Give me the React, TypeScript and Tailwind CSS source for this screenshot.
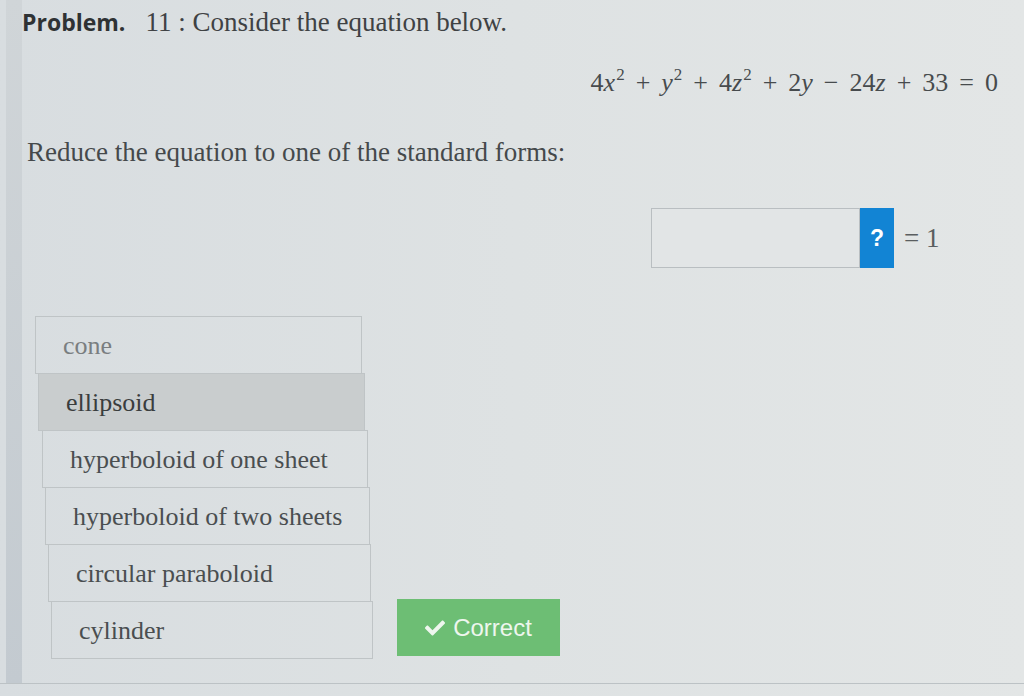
import { FaCheck } from "react-icons/fa";

const SERIF = "font-['Liberation_Serif','DejaVu_Serif',serif]";

const OPTIONS = [
  { label: "cone", indent: "ml-[13px]", width: "w-[327px]", muted: true },
  { label: "ellipsoid", indent: "ml-[16px]", width: "w-[327px]", selected: true },
  { label: "hyperboloid of one sheet", indent: "ml-[20px]", width: "w-[326px]" },
  { label: "hyperboloid of two sheets", indent: "ml-[23px]", width: "w-[325px]" },
  { label: "circular paraboloid", indent: "ml-[26px]", width: "w-[323px]" },
];

function Var({ children }: { children: React.ReactNode }) {
  return <span className="italic">{children}</span>;
}

function Sq() {
  return <sup className="-top-[11px] ml-[1px] text-[17px]">2</sup>;
}

function Op({ children }: { children: React.ReactNode }) {
  return <span className="mx-[11px]">{children}</span>;
}

function OptionRow({
  label,
  width,
  selected,
  muted,
}: {
  label: string;
  width: string;
  selected?: boolean;
  muted?: boolean;
}) {
  return (
    <div
      className={
        "-mt-px flex h-[58px] items-center border border-[#bfc4c6] pl-[27px] text-[26px] " +
        width +
        " " +
        (selected ? "bg-[#c9cdce] text-[#3a3d3e]" : muted ? "text-[#7a7e80]" : "text-[#4a4e50]")
      }
    >
      {label}
    </div>
  );
}

export default function App() {
  return (
    <div className="h-[696px] w-[1024px] overflow-hidden bg-gradient-to-r from-[#d8dde0] via-[#dee2e3] to-[#e3e6e6]">
      <div className="flex h-[684px] border-b border-[#bcc2c5]">
        <div className="ml-[6px] w-[16px] shrink-0 bg-gradient-to-b from-[#d0d5d8] to-[#c3cad0]" />
        <div className={"flex flex-1 flex-col " + SERIF}>
          <div className="mt-[2px] flex items-baseline text-[27px] text-[#3f4244]">
            <span className="font-['Open_Sans','Noto_Sans',sans-serif] text-[23px] font-bold text-[#2f3234]">
              Problem.
            </span>
            <span className="ml-[20px]">11 : Consider the equation below.</span>
          </div>

          <div className="mr-[26px] mt-[25px] self-end text-[26px] leading-[30px] text-[#474b4d]">
            4<Var>x</Var>
            <Sq />
            <Op>+</Op>
            <Var>y</Var>
            <Sq />
            <Op>+</Op>
            4<Var>z</Var>
            <Sq />
            <Op>+</Op>
            2<Var>y</Var>
            <Op>−</Op>
            24<Var>z</Var>
            <Op>+</Op>
            33
            <Op>=</Op>0
          </div>

          <div className="ml-[5px] mt-[34px] text-[27px] text-[#45494b]">
            Reduce the equation to one of the standard forms:
          </div>

          <div className="ml-[629px] mt-[36px] flex items-center">
            <div className="h-[60px] w-[209px] border border-[#b9bec1] bg-[#e2e5e6]" />
            <div className="flex h-[60px] w-[34px] items-center justify-center bg-[#1284d4] font-['Liberation_Sans',Arial,sans-serif] text-[23px] font-bold text-white">
              ?
            </div>
            <span className="ml-[10px] text-[27px] text-[#5a5e60]">= 1</span>
          </div>

          <div className="mt-[49px] flex flex-col">
            {OPTIONS.map((o) => (
              <div key={o.label} className={o.indent}>
                <OptionRow label={o.label} width={o.width} selected={o.selected} muted={o.muted} />
              </div>
            ))}
            <div className="ml-[29px] flex items-start">
              <OptionRow label="cylinder" width="w-[322px]" />
              <div className="-mt-[3px] ml-[24px] flex h-[57px] w-[163px] items-center justify-center gap-[8px] bg-[#6dbe74] font-['Liberation_Sans',Arial,sans-serif] text-[24px] text-[#eef6ee]">
                <FaCheck className="h-[20px] w-[20px]" />
                Correct
              </div>
            </div>
          </div>
        </div>
      </div>
    </div>
  );
}
